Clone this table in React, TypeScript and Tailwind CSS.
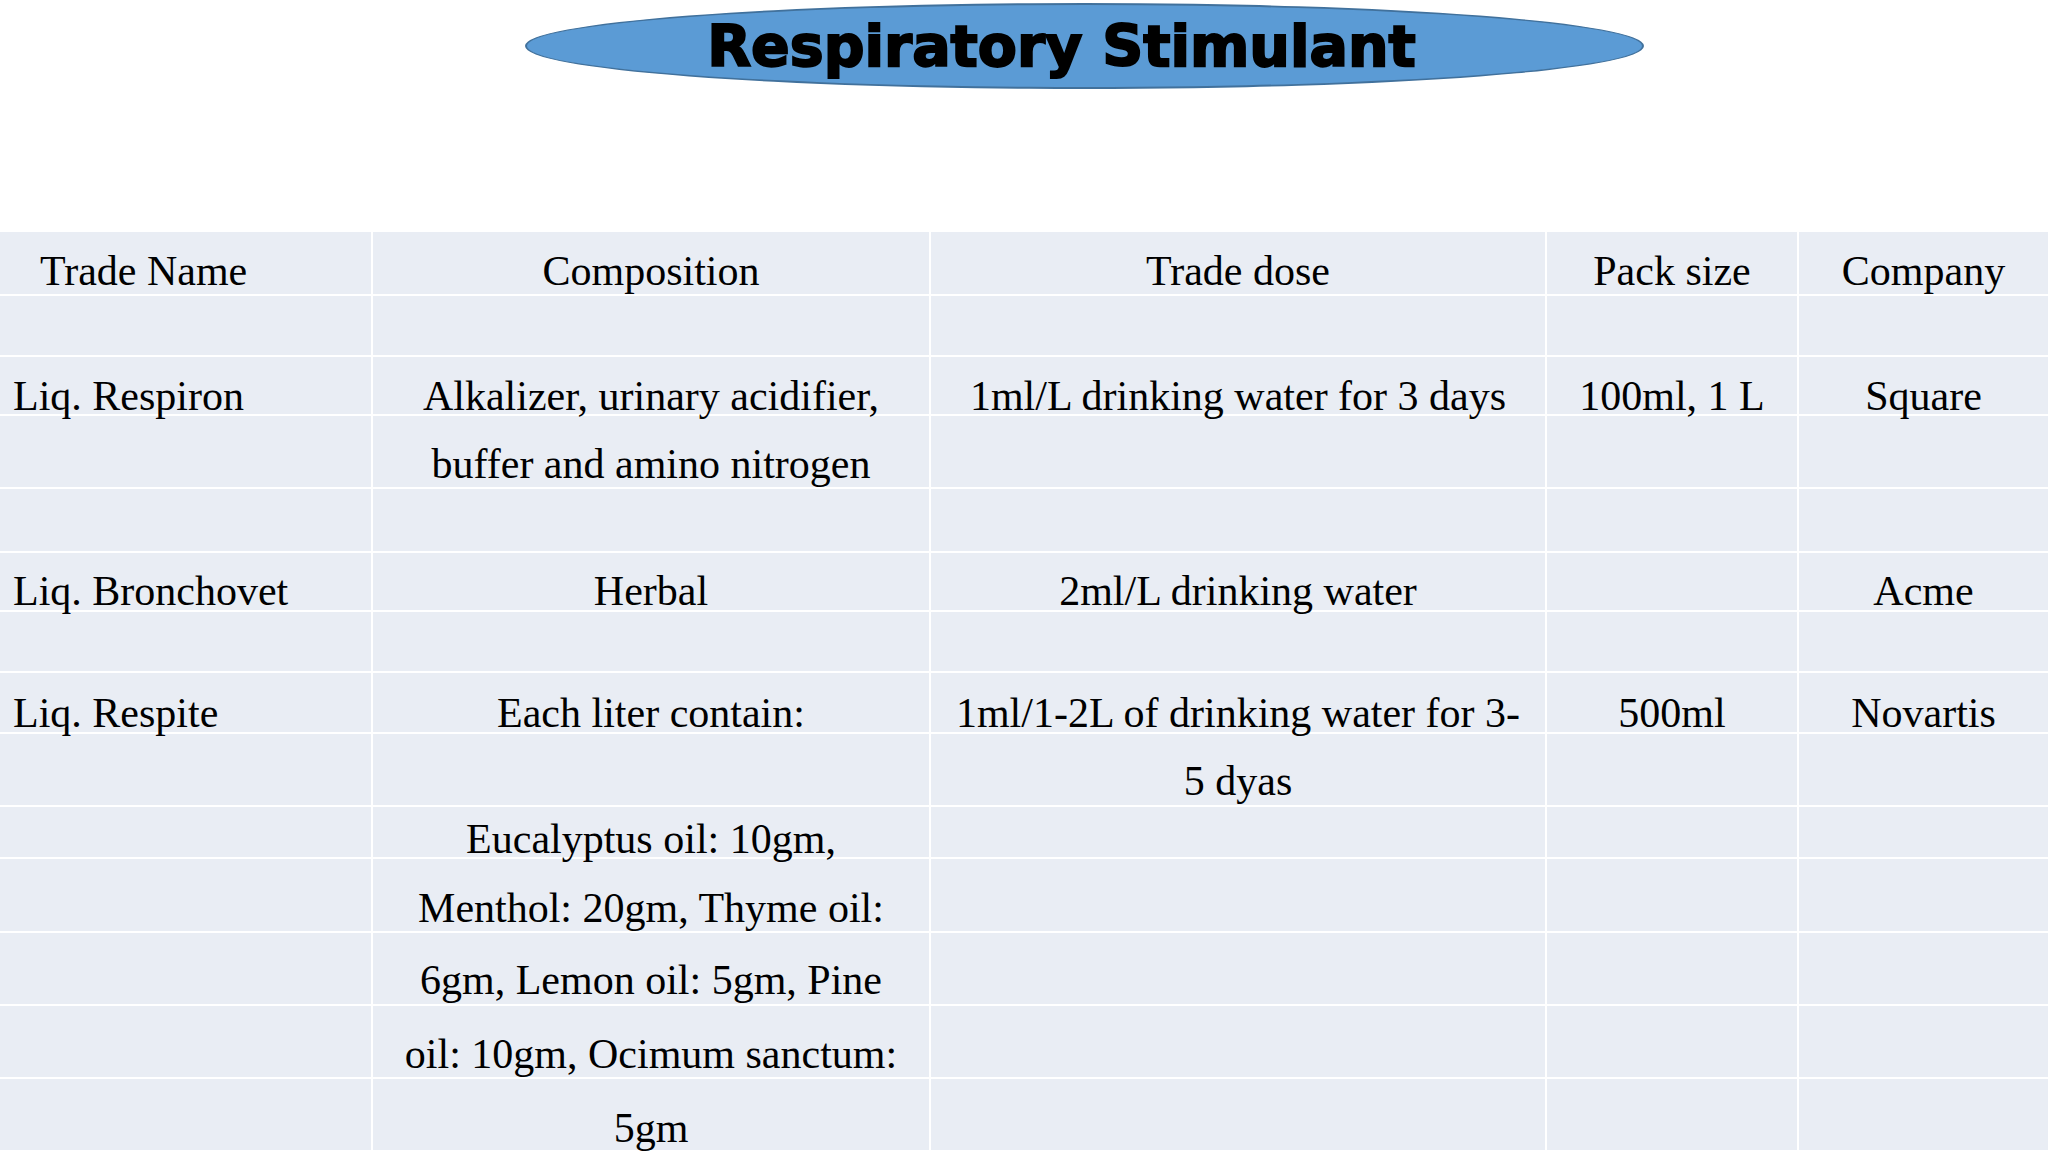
// Respiratory Stimulant slide: title ellipse and product table

type Row = {
  h: string
  pb: string
  cells: string[]
  header?: boolean
}

const rows: Row[] = [
  { h: 'h-[62px]', pb: 'pb-[8px]', header: true, cells: ['Trade Name', 'Composition', 'Trade dose', 'Pack size', 'Company'] },
  { h: 'h-[59px]', pb: 'pb-0', cells: ['', '', '', '', ''] },
  { h: 'h-[57px]', pb: 'pb-[3px]', cells: ['Liq. Respiron', 'Alkalizer, urinary acidifier,', '1ml/L drinking water for 3 days', '100ml, 1 L', 'Square'] },
  { h: 'h-[71px]', pb: 'pb-[8px]', cells: ['', 'buffer and amino nitrogen', '', '', ''] },
  { h: 'h-[62px]', pb: 'pb-0', cells: ['', '', '', '', ''] },
  { h: 'h-[57px]', pb: 'pb-[4px]', cells: ['Liq. Bronchovet', 'Herbal', '2ml/L drinking water', '', 'Acme'] },
  { h: 'h-[59px]', pb: 'pb-0', cells: ['', '', '', '', ''] },
  { h: 'h-[59px]', pb: 'pb-[4px]', cells: ['Liq. Respite', 'Each liter contain:', '1ml/1-2L of drinking water for 3-', '500ml', 'Novartis'] },
  { h: 'h-[71px]', pb: 'pb-[9px]', cells: ['', '', '5 dyas', '', ''] },
  { h: 'h-[50px]', pb: 'pb-[3px]', cells: ['', 'Eucalyptus oil: 10gm,', '', '', ''] },
  { h: 'h-[72px]', pb: 'pb-[8px]', cells: ['', 'Menthol: 20gm, Thyme oil:', '', '', ''] },
  { h: 'h-[71px]', pb: 'pb-[9px]', cells: ['', '6gm, Lemon oil: 5gm, Pine', '', '', ''] },
  { h: 'h-[71px]', pb: 'pb-[8px]', cells: ['', 'oil: 10gm, Ocimum sanctum:', '', '', ''] },
  { h: 'h-[71px]', pb: 'pb-[7px]', cells: ['', '5gm', '', '', ''] },
]

function Cell({ text, col, row }: { text: string; col: number; row: Row }) {
  const align =
    col === 0 ? (row.header ? 'justify-start pl-[40px]' : 'justify-start pl-[13px]') : 'justify-center'
  return (
    <div className={`flex items-end bg-[#e9edf4] ${row.h} ${row.pb} ${align}`}>
      {text && <span className="relative whitespace-nowrap leading-[30px]">{text}</span>}
    </div>
  )
}

export default function App() {
  return (
    <div className="w-[2048px] h-[1152px] bg-white overflow-hidden flex flex-col text-black">
      {/* Title */}
      <div className="shrink-0 mt-[3px] ml-[525px] w-[1119px] h-[86px] rounded-[50%] bg-[#5b9bd5] border-2 border-[#41719c] flex items-center justify-center pr-[46px]">
        <span
          className="text-[57px] leading-none font-bold text-black whitespace-nowrap [-webkit-text-stroke:2px_#000]"
          style={{ fontFamily: '"DejaVu Sans", "Liberation Sans", sans-serif' }}
        >
          Respiratory Stimulant
        </span>
      </div>

      {/* Table */}
      <div
        className="shrink-0 mt-[143px] grid grid-cols-[371px_556px_614px_250px_249px] gap-[2px] bg-white text-[42px]"
        style={{ fontFamily: '"Liberation Serif", "Times New Roman", serif' }}
      >
        {rows.map((row, r) =>
          row.cells.map((text, c) => <Cell key={`${r}-${c}`} text={text} col={c} row={row} />)
        )}
      </div>
    </div>
  )
}
